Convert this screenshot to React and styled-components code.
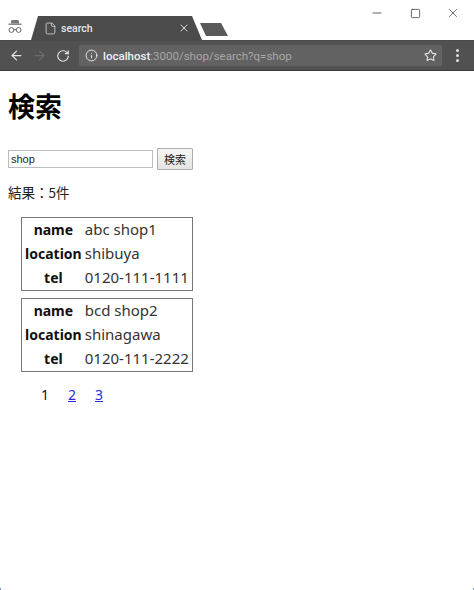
import React from "react";
import styled, { createGlobalStyle } from "styled-components";
import { ArrowLeft, ArrowRight, RotateCw, Info, Star, X, Minus, Square, File } from "lucide-react";

const GlobalStyle = createGlobalStyle`
  html, body { margin: 0; padding: 0; background: #fff; }
  body {
    width: 474px;
    height: 590px;
    overflow: hidden;
    font-family: "Noto Sans", "Noto Sans CJK JP", sans-serif;
    color: #111;
  }
`;

const Browser = styled.div`
  width: 474px;
  height: 590px;
  display: flex;
  flex-direction: column;
`;

const TitleBar = styled.div`
  height: 40px;
  display: flex;
  align-items: flex-end;
  position: relative;
  flex-shrink: 0;
`;

const Incognito = styled.div`
  width: 30px;
  height: 24px;
  display: flex;
  align-items: center;
  padding: 0 0 3px 8px;
  box-sizing: border-box;
`;

const Tab = styled.div`
  width: 171px;
  height: 24px;
  margin-left: 1px;
  padding: 0 0 0 13px;
  box-sizing: border-box;
  display: flex;
  align-items: center;
  background: #4b4b4b;
  clip-path: polygon(0 100%, 7px 0, 161px 0, 171px 100%);
  color: #e6e6e6;
  font-family: Roboto, sans-serif;
  font-size: 10.5px;
  font-weight: 500;
`;

const TabTitle = styled.span`
  margin-left: 4px;
  flex: 1;
`;

const CloseTab = styled.span`
  display: flex;
  margin-right: 12px;
  color: #d8d8d8;
`;

const NewTab = styled.div`
  width: 28px;
  height: 13px;
  margin: 0 0 4px -2px;
  background: #5a5a5a;
  clip-path: polygon(0 0, 21px 0, 28px 100%, 6px 100%);
`;

const WindowControls = styled.div`
  position: absolute;
  top: 6px;
  right: 2px;
  display: flex;
  color: #333;
`;

const ControlSlot = styled.span`
  width: 38px;
  height: 14px;
  display: flex;
  align-items: center;
  justify-content: center;
`;

const Toolbar = styled.div`
  height: 31px;
  flex-shrink: 0;
  background: #515151;
  border-top: 1px solid #4b4b4b;
  border-bottom: 1px solid #3a3a3a;
  box-sizing: border-box;
  display: flex;
  align-items: center;
  padding-left: 9px;
`;

const NavButton = styled.span`
  display: flex;
  width: 23.33px;
  color: ${(p) => (p.$off ? "#6d6d6d" : "#e4e4e4")};
`;

const AddressBar = styled.div`
  width: 363px;
  height: 21px;
  padding: 0 5px 0 6px;
  box-sizing: border-box;
  background: #626262;
  border-radius: 2px;
  display: flex;
  align-items: center;
  color: #e8e8e8;
  font-family: Roboto, sans-serif;
  font-size: 11.5px;
`;

const Url = styled.span`
  margin-left: 5px;
  flex: 1;
  color: #a8a8a8;
  white-space: nowrap;
`;

const Host = styled.span`
  color: #f0f0f0;
  font-weight: 500;
`;

const MenuDots = styled.div`
  margin-left: 14px;
  display: flex;
  flex-direction: column;
  gap: 2px;
`;

const Dot = styled.i`
  display: block;
  width: 3px;
  height: 3px;
  border-radius: 50%;
  background: #e0e0e0;
`;

const Page = styled.main`
  padding: 0 8px;
  flex: 1;
`;

const Heading = styled.h1`
  margin: 16px 0 0;
  font-size: 27px;
  line-height: 38px;
  font-weight: 700;
  color: #000;
  font-family: "Noto Sans CJK JP", sans-serif;
`;

const SearchForm = styled.form`
  display: flex;
  align-items: center;
  gap: 4px;
  margin-top: 23px;
`;

const SearchInput = styled.input`
  width: 145px;
  height: 18px;
  padding: 0 2px;
  box-sizing: border-box;
  border: 1px solid #bdbdbd;
  font-family: "Liberation Sans", sans-serif;
  font-size: 11px;
  color: #222;
  outline: none;
`;

const SearchButton = styled.button`
  width: 36px;
  height: 22px;
  padding: 0;
  border: 1px solid #adadad;
  border-radius: 1px;
  background: linear-gradient(#f6f6f6, #e4e4e4);
  font-family: "Noto Sans CJK JP", sans-serif;
  font-size: 11px;
  color: #222;
`;

const ResultCount = styled.p`
  margin: 12px 0 0;
  font-size: 13.5px;
  line-height: 20px;
  color: #222;
  font-family: "Noto Sans CJK JP", sans-serif;
`;

const ShopList = styled.ul`
  list-style: none;
  margin: 15px 0 0;
  padding: 0 0 0 13px;
  display: flex;
  flex-direction: column;
  gap: 7px;
`;

const ShopCard = styled.table`
  width: 172px;
  box-sizing: border-box;
  border: 1px solid #777;
  border-collapse: separate;
  border-spacing: 0;
  line-height: 24px;
`;

const Label = styled.th`
  padding: 0 1px 0 3px;
  height: 24px;
  text-align: center;
  font-size: 14px;
  font-weight: 700;
  color: #111;
`;

const Value = styled.td`
  padding: 0 3px 2px 2px;
  height: 22px;
  line-height: 22px;
  font-size: 15px;
  font-weight: 400;
  color: #333;
  white-space: nowrap;
`;

const Pager = styled.nav`
  display: flex;
  gap: 19px;
  margin: 13px 0 0 33px;
  font-size: 14px;
  line-height: 20px;
`;

const PageLink = styled.a`
  color: #2a2ae0;
  text-decoration: underline;
`;

const CornerDot = styled.i`
  position: absolute;
  bottom: 0;
  ${(p) => p.$side}: 0;
  width: 1px;
  height: 2px;
  background: #7f9cc4;
`;

const shops = [
  { name: "abc shop1", location: "shibuya", tel: "0120-111-1111" },
  { name: "bcd shop2", location: "shinagawa", tel: "0120-111-2222" },
];

const IncognitoIcon = () => (
  <svg width="14" height="15" viewBox="0 0 14 15" fill="none">
    <path d="M3.6 1h6.8l1 3.6H2.6z" fill="#777" />
    <rect x="0.5" y="4.6" width="13" height="1.3" fill="#777" />
    <circle cx="3.4" cy="11" r="2.4" stroke="#666" strokeWidth="1" />
    <circle cx="10.6" cy="11" r="2.4" stroke="#666" strokeWidth="1" />
    <path d="M5.8 10.6h2.4" stroke="#666" strokeWidth="1" />
  </svg>
);

export default function App() {
  return (
    <Browser lang="ja">
      <GlobalStyle />
      <TitleBar>
        <Incognito>
          <IncognitoIcon />
        </Incognito>
        <Tab>
          <File size={13} color="#d8d8d8" strokeWidth={1.5} />
          <TabTitle>search</TabTitle>
          <CloseTab>
            <X size={12} strokeWidth={2} />
          </CloseTab>
        </Tab>
        <NewTab />
        <WindowControls>
          <ControlSlot>
            <Minus size={14} strokeWidth={1.3} />
          </ControlSlot>
          <ControlSlot>
            <Square size={11} strokeWidth={1.6} />
          </ControlSlot>
          <ControlSlot>
            <X size={14} strokeWidth={1.2} />
          </ControlSlot>
        </WindowControls>
      </TitleBar>
      <Toolbar>
        <NavButton>
          <ArrowLeft size={15} strokeWidth={2} />
        </NavButton>
        <NavButton $off>
          <ArrowRight size={15} strokeWidth={2} />
        </NavButton>
        <NavButton>
          <RotateCw size={14} strokeWidth={2} />
        </NavButton>
        <AddressBar>
          <Info size={13} strokeWidth={1.8} />
          <Url>
            <Host>localhost</Host>:3000/shop/search?q=shop
          </Url>
          <Star size={13} strokeWidth={2} />
        </AddressBar>
        <MenuDots>
          <Dot />
          <Dot />
          <Dot />
        </MenuDots>
      </Toolbar>
      <Page>
        <Heading>検索</Heading>
        <SearchForm onSubmit={(e) => e.preventDefault()}>
          <SearchInput defaultValue="shop" />
          <SearchButton>検索</SearchButton>
        </SearchForm>
        <ResultCount>結果：5件</ResultCount>
        <ShopList>
          {shops.map((shop) => (
            <li key={shop.name}>
              <ShopCard>
                <tbody>
                  <tr>
                    <Label>name</Label>
                    <Value>{shop.name}</Value>
                  </tr>
                  <tr>
                    <Label>location</Label>
                    <Value>{shop.location}</Value>
                  </tr>
                  <tr>
                    <Label>tel</Label>
                    <Value>{shop.tel}</Value>
                  </tr>
                </tbody>
              </ShopCard>
            </li>
          ))}
        </ShopList>
        <Pager>
          <span>1</span>
          <PageLink href="#2">2</PageLink>
          <PageLink href="#3">3</PageLink>
        </Pager>
      </Page>
      <CornerDot $side="left" />
      <CornerDot $side="right" />
    </Browser>
  );
}
